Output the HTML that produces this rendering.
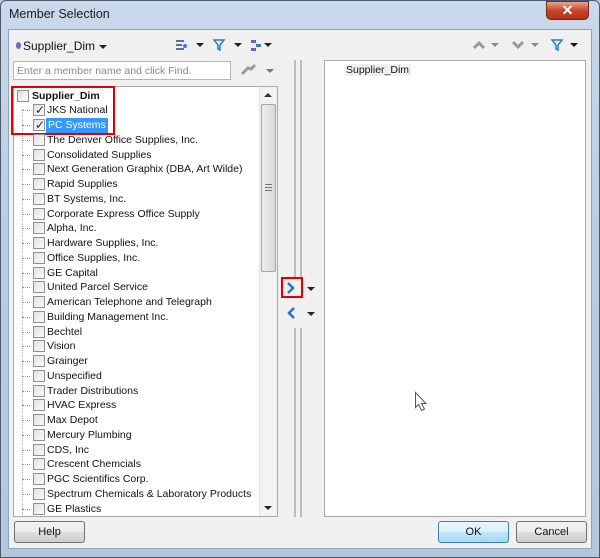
<!DOCTYPE html>
<html><head><style>
*{box-sizing:border-box;margin:0;padding:0}
body{width:600px;height:558px;overflow:hidden;font-family:"Liberation Sans",sans-serif;background:#b9cbe0;position:relative}
.frame{position:absolute;left:0;top:0;width:600px;height:558px;background:linear-gradient(180deg,#c9d8ea 0%,#bccde2 40%,#b4c6dc 100%);border:1px solid #4d5a6b;border-radius:6px 6px 0 0}
.title{position:absolute;left:9px;top:7px;font-size:12.5px;color:#1b1b1b}
.close{position:absolute;left:546px;top:1px;width:43px;height:19px;border-radius:0 0 5px 5px;background:linear-gradient(#e9a392,#c7452c 50%,#b8321b);border:1px solid #6b2b20;color:#fff;font-size:14px;font-weight:bold;text-align:center;line-height:17px}
.client{position:absolute;left:8px;top:29px;width:584px;height:520px;background:#f0f0f0;border:1px solid #8ea3bd}
.abs{position:absolute}
.tree{position:absolute;left:13px;top:86px;width:265px;height:431px;background:#fff;border:1px solid #a9a9a9;overflow:hidden}
.row{position:absolute;left:0;height:15px;font-size:10.5px;line-height:15px;color:#111;white-space:nowrap}
.cb{position:absolute;width:12px;height:12px;border:1px solid #8f8f8f;background:linear-gradient(135deg,#e2e2e2,#fafafa);top:1px}
.dot{position:absolute;border-top:1px dotted #999;width:8px;top:7px}
.scroll{position:absolute;left:245px;top:0;width:18px;height:429px;background:#f3f3f3;border-left:1px solid #e3e3e3}
.thumb{position:absolute;left:1px;top:17px;width:15px;height:168px;background:linear-gradient(90deg,#ececec,#d9d9d9);border:1px solid #a3a3a3;border-radius:2px}
.right{position:absolute;left:324px;top:60px;width:262px;height:457px;background:#fff;border:1px solid #a9a9a9}
.btn{position:absolute;top:521px;width:71px;height:22px;border:1px solid #707070;border-radius:3px;background:linear-gradient(#f2f2f2,#ebebeb 50%,#dddddd 51%,#cfcfcf);font-size:11px;text-align:center;line-height:20px;color:#111}
.tri{position:absolute;width:0;height:0;border-left:4px solid transparent;border-right:4px solid transparent;border-top:4px solid #222}
</style></head><body>
<div class="frame"></div>
<div class="title">Member Selection</div>
<div class="close">✕</div>
<div class="client"></div>

<div class="abs" style="left:16px;top:42px;width:5px;height:7px;background:#6070c0;border-radius:50%"></div>
<div class="abs" style="left:23px;top:39px;font-size:12px;color:#111">Supplier_Dim</div>
<div class="tri" style="left:99px;top:45px"></div>
<svg class="abs" style="left:174px;top:38px" width="100" height="14">
<g fill="#5a6e9a"><rect x="2" y="2" width="8" height="2"/><rect x="2" y="6" width="6" height="2"/><rect x="2" y="10" width="8" height="2"/><circle cx="11" cy="8" r="2" fill="#3c7ad0"/></g>
<path d="M22 5h8l-4 4z" fill="#222"/>
<path d="M40 2h10l-4 5v5l-2-1v-4z" fill="none" stroke="#2f7bd0" stroke-width="1.5"/>
<path d="M60 5h8l-4 4z" fill="#222"/>
<g fill="#4f73b0"><rect x="77" y="2" width="5" height="3"/><rect x="82" y="6" width="5" height="3"/><rect x="77" y="10" width="5" height="3"/></g>
<path d="M90 5h8l-4 4z" fill="#222"/>
</svg>
<div class="abs" style="left:13px;top:61px;width:218px;height:19px;background:#fff;border:1px solid #b5b5b5;font-size:10.5px;color:#8a8a8a;padding:3px 0 0 3px">Enter a member name and click Find.</div>
<svg class="abs" style="left:240px;top:63px" width="36" height="14"><path d="M2 11l6-6 3 1 4-4" stroke="#9a9a9a" stroke-width="3" fill="none"/><path d="M26 6h8l-4 4z" fill="#777"/></svg>

<div class="tree">
<div class="scroll"><div class="tri" style="left:4px;top:6px;border-top:0;border-bottom:4px solid #333"></div><div class="thumb"></div>
<div class="abs" style="left:5px;top:97px;width:7px;height:7px;border-top:1px solid #777;border-bottom:1px solid #777"></div><div class="abs" style="left:5px;top:100px;width:7px;border-top:1px solid #777"></div>
<div class="tri" style="left:4px;top:419px"></div></div>
<div class="abs" style="left:8px;top:22px;height:410px;border-left:1px dotted #aaa"></div>
</div>

<div class="abs" style="left:294px;top:60px;width:2px;height:217px;border-left:1px solid #bbb;border-right:1px solid #bbb"></div>
<div class="abs" style="left:300px;top:60px;width:2px;height:217px;border-left:1px solid #bbb;border-right:1px solid #bbb"></div>
<div class="abs" style="left:294px;top:328px;width:2px;height:189px;border-left:1px solid #bbb;border-right:1px solid #bbb"></div>
<div class="abs" style="left:300px;top:328px;width:2px;height:189px;border-left:1px solid #bbb;border-right:1px solid #bbb"></div>

<div class="abs" style="left:281px;top:277px;width:22px;height:21px;border:2px solid #e00000;background:#f0f0f0"></div>
<svg class="abs" style="left:284px;top:280px" width="40" height="45">
<path d="M4 3l5 5-5 5" stroke="#2f6fc8" stroke-width="2.5" fill="none"/>
<path d="M23 7h8l-4 4z" fill="#222"/>
<path d="M10 28l-5 5 5 5" stroke="#2f6fc8" stroke-width="2.5" fill="none"/>
<path d="M23 32h8l-4 4z" fill="#222"/>
</svg>

<svg class="abs" style="left:472px;top:38px" width="110" height="14">
<path d="M2 10l5-5 5 5" stroke="#999" stroke-width="3" fill="none"/>
<path d="M19 5h8l-4 4z" fill="#888"/>
<path d="M41 4l5 5 5-5" stroke="#999" stroke-width="3" fill="none"/>
<path d="M59 5h8l-4 4z" fill="#888"/>
<path d="M80 2h10l-4 5v5l-2-1v-4z" fill="none" stroke="#2f7bd0" stroke-width="1.5"/>
<path d="M98 5h8l-4 4z" fill="#111"/>
</svg>

<div class="right"><div class="abs" style="left:19px;top:3px;font-size:10.5px;background:#f0f0f0;padding:0 2px;color:#111">Supplier_Dim</div></div>
<svg class="abs" style="left:414px;top:391px" width="16" height="22"><path d="M1.5 1.5v15l3-3 3 6 3-1.5-3-5.5h4.5z" fill="#fff" stroke="#555"/></svg>

<div class="abs" style="left:11px;top:86px;width:104px;height:49px;border:2px solid #e00000"></div>

<div class="btn" style="left:14px">Help</div>
<div class="btn" style="left:438px;border-color:#3c7fb1;background:linear-gradient(#eaf6fd,#d9f0fc 50%,#bee6fd 51%,#a7d9f5)">OK</div>
<div class="btn" style="left:516px">Cancel</div>

<div id="rows"></div>
<script>
var names=["Supplier_Dim","JKS National","PC Systems","The Denver Office Supplies, Inc.","Consolidated Supplies","Next Generation Graphix (DBA, Art Wilde)","Rapid Supplies","BT Systems, Inc.","Corporate Express Office Supply","Alpha, Inc.","Hardware Supplies, Inc.","Office Supplies, Inc.","GE Capital","United Parcel Service","American Telephone and Telegraph","Building Management Inc.","Bechtel","Vision","Grainger","Unspecified","Trader Distributions","HVAC Express","Max Depot","Mercury Plumbing","CDS, Inc","Crescent Chemcials","PGC Scientifics Corp.","Spectrum Chemicals & Laboratory Products","GE Plastics"];
var h="";
names.forEach(function(n,i){
var top=88.5+i*14.75;
if(i==0){h+='<div class="row" style="top:'+top+'px;left:17px"><div class="cb" style="left:0"></div><span style="position:absolute;left:15px;font-weight:bold">'+n+'</span></div>';}
else{
var chk=(i<3)?'<span style="position:absolute;left:1px;top:-2px;font-size:12px;color:#223">✓</span>':'';
var txt=(i==2)?'<span style="position:absolute;left:13px;background:#3399ff;color:#fff;padding:0 2px">'+n+'</span>':'<span style="position:absolute;left:14px">'+n+'</span>';
h+='<div class="row" style="top:'+top+'px;left:33px"><div class="dot" style="left:-11px"></div><div class="cb" style="left:0">'+chk+'</div>'+txt+'</div>';}
});
document.getElementById("rows").innerHTML=h;
</script>
</body></html>
